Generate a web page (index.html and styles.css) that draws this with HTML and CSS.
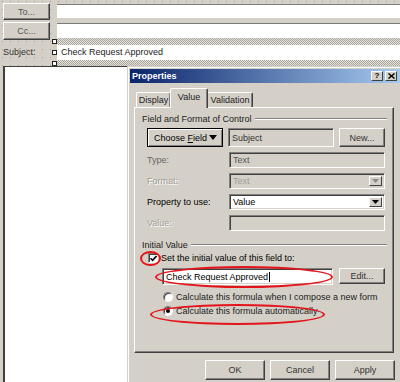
FILE: index.html
```html
<!DOCTYPE html>
<html lang="en">
<head>
  <meta charset="UTF-8">
  <meta name="viewport" content="width=device-width, initial-scale=1.0">
  <title>Properties</title>
  <link rel="stylesheet" href="styles.css">
</head>
<body>
  <div class="screen">
    <div class="form-head">
      <button class="btn addr-btn to-btn">To...</button>
      <div class="field to-field"></div>
      <button class="btn addr-btn cc-btn">Cc...</button>
      <div class="field cc-field"></div>
      <span class="handle handle-1"></span>
      <div class="hatch hatch-1"></div>
      <span class="subject-label">Subject:</span>
      <span class="handle handle-2"></span>
      <div class="field subject-field">Check Request Approved</div>
      <span class="handle handle-3"></span>
      <div class="hatch hatch-2"></div>
    </div>
    <div class="message"></div>

    <div class="dialog">
      <div class="titlebar">
        <span class="title">Properties</span>
        <span class="cap-btns">
          <span class="cap-btn">?</span>
          <span class="cap-btn">
            <svg width="7" height="6" viewBox="0 0 7 6"><path d="M0.5 0.5 L6.5 5.5 M6.5 0.5 L0.5 5.5" stroke="#000" stroke-width="1.4"/></svg>
          </span>
        </span>
      </div>

      <div class="dialog-body">
        <div class="tabs">
          <span class="tab tab-display">Display</span>
          <span class="tab tab-active">Value</span>
          <span class="tab tab-validation">Validation</span>
        </div>

        <div class="panel">
          <div class="group-head"><span>Field and Format of Control</span><span class="rule"></span></div>

          <div class="choose-row">
            <button class="btn choose-btn">
              <span>Choose <u>F</u>ield</span>
              <svg width="8" height="5" viewBox="0 0 8 5"><path d="M0 0 H8 L4 5 Z" fill="#000"/></svg>
            </button>
            <div class="box box-disabled subject-box">Subject</div>
            <button class="btn new-btn">New...</button>
          </div>

          <div class="prop-row">
            <span class="label label-dim">Type:</span>
            <div class="box box-disabled value-dim">Text</div>
          </div>
          <div class="prop-row">
            <span class="label label-off">Format:</span>
            <div class="box box-disabled select value-off">
              <span>Text</span>
              <span class="drop-btn">
                <svg width="7" height="4" viewBox="0 0 7 4"><path d="M0 0 H7 L3.5 4 Z" fill="#8a8a8a"/></svg>
              </span>
            </div>
          </div>
          <div class="prop-row">
            <span class="label">Property to use:</span>
            <div class="box select">
              <span>Value</span>
              <span class="drop-btn">
                <svg width="7" height="4" viewBox="0 0 7 4"><path d="M0 0 H7 L3.5 4 Z" fill="#000"/></svg>
              </span>
            </div>
          </div>
          <div class="prop-row">
            <span class="label label-off">Value:</span>
            <div class="box box-disabled"></div>
          </div>

          <div class="group-head initial-head"><span>Initial Value</span><span class="rule"></span></div>

          <div class="check-row">
            <span class="checkbox">
              <svg width="7" height="7" viewBox="0 0 7 7"><path d="M0.5 3.2 L2.6 5.4 L6.5 1" fill="none" stroke="#000" stroke-width="1.6"/></svg>
            </span>
            <span>Set the initial value of this field to:</span>
          </div>

          <div class="text-row">
            <div class="box text-box">Check Request Approved<span class="caret"></span></div>
            <button class="btn edit-btn">Edit...</button>
          </div>

          <div class="radio-row">
            <span class="radio"></span>
            <span>Calculate this formula when I compose a new form</span>
          </div>
          <div class="radio-row radio-row-2">
            <span class="radio radio-on"></span>
            <span>Calculate this formula automatically</span>
          </div>

          <span class="mark mark-check"></span>
          <span class="mark mark-text"></span>
          <span class="mark mark-auto"></span>
        </div>

        <div class="dialog-buttons">
          <button class="btn footer-btn">OK</button>
          <button class="btn footer-btn">Cancel</button>
          <button class="btn footer-btn">Apply</button>
        </div>
      </div>
    </div>
  </div>
</body>
</html>
```

FILE: styles.css
```css
* {
  box-sizing: border-box;
}

body {
  margin: 0;
  font-family: "Liberation Sans", Arial, sans-serif;
  font-size: 9px;
  color: #000;
  background-color: #d4d0c8;
}

.screen {
  position: relative;
  width: 400px;
  height: 382px;
  overflow: hidden;
  background-color: #d4d0c8;
}

/* classic 3d button */
.btn {
  font: inherit;
  color: #000;
  background-color: #d4d0c8;
  border: 1px solid;
  border-color: #fff #404040 #404040 #fff;
  box-shadow: inset -1px -1px #808080;
  padding: 0;
  margin: 0;
  display: flex;
  align-items: center;
  justify-content: center;
}

/* ---------- form being designed ---------- */

.form-head {
  display: grid;
  grid-template-columns: 57px 1fr;
  grid-template-rows: 22px 16px 7px 15px 6px;
  height: 66px;
  background-image: conic-gradient(at 1px 1px, transparent 270deg, #a3a097 0);
  background-size: 8px 8px;
  background-position: 2px 1px;
}

.addr-btn {
  width: 47px;
  margin-left: 3px;
  color: #555;
}

.to-btn {
  grid-row: 1;
  grid-column: 1;
  height: 17px;
  margin-top: 3px;
}

.cc-btn {
  grid-row: 2 / 4;
  grid-column: 1;
  height: 18px;
  align-self: start;
}

.field {
  background-color: #fff;
  border-top: 1px solid #7a7a7a;
}

.to-field {
  grid-row: 1;
  grid-column: 2;
  margin-top: 4px;
  height: 14px;
}

.cc-field {
  grid-row: 2;
  grid-column: 2;
  margin-top: 1px;
  height: 15px;
}

.subject-field {
  grid-row: 4;
  grid-column: 2;
  height: 15px;
  border-top: none;
  padding-left: 4px;
  line-height: 15px;
  color: #222;
}

.hatch {
  grid-column: 2;
  background: repeating-conic-gradient(#a8a59e 0 25%, #e6e3dd 0 50%) 0 0 / 2px 2px;
}

.hatch-1 {
  grid-row: 3;
}

.hatch-2 {
  grid-row: 5;
}

.subject-label {
  grid-row: 4;
  grid-column: 1;
  padding-left: 3px;
  line-height: 15px;
  color: #333;
}

.handle {
  grid-column: 1;
  justify-self: end;
  align-self: center;
  width: 5px;
  height: 5px;
  background-color: #fff;
  border: 1px solid #222;
}

.handle-1 {
  grid-row: 3;
}

.handle-2 {
  grid-row: 4;
}

.handle-3 {
  grid-row: 5;
}

.message {
  margin-left: 3px;
  height: 316px;
  background-color: #fff;
  border-left: 2px solid #404040;
  border-top: 1px solid #404040;
}

/* ---------- properties dialog ---------- */

.dialog {
  position: absolute;
  left: 127px;
  top: 66px;
  width: 276px;
  height: 330px;
  background-color: #d4d0c8;
  border: 1px solid;
  border-color: #d4d0c8 #404040 #404040 #d4d0c8;
  box-shadow: inset 1px 1px #fff, inset -1px -1px #808080;
  padding: 2px;
}

.titlebar {
  height: 14px;
  display: flex;
  align-items: center;
  justify-content: space-between;
  padding: 0 3px 0 2px;
  background: linear-gradient(90deg, #0a246a, #a6caf0);
  color: #fff;
  font-weight: bold;
}

.cap-btns {
  display: flex;
  gap: 2px;
}

.cap-btn {
  width: 12px;
  height: 10px;
  display: flex;
  align-items: center;
  justify-content: center;
  background-color: #d4d0c8;
  border: 1px solid;
  border-color: #fff #404040 #404040 #fff;
  color: #000;
  font-size: 8px;
  line-height: 8px;
}

.dialog-body {
  padding: 5px 0 0 4px;
}

.tabs {
  display: flex;
  align-items: flex-end;
  height: 19px;
  padding-left: 2px;
}

.tab {
  height: 15px;
  line-height: 15px;
  text-align: center;
  border: 1px solid;
  border-bottom: none;
  border-color: #fff #404040 #404040 #fff;
  border-radius: 2px 2px 0 0;
  box-shadow: inset -1px 0 #808080;
  color: #222;
}

.tab-display {
  width: 35px;
}

.tab-active {
  position: relative;
  z-index: 1;
  width: 38px;
  height: 20px;
  line-height: 14px;
  margin: 0 0 -1px -1px;
  padding-top: 1px;
  background-color: #d4d0c8;
}

.tab-validation {
  width: 46px;
  margin-left: -1px;
}

.panel {
  position: relative;
  width: 260px;
  height: 246px;
  border: 1px solid;
  border-color: #fff #404040 #404040 #fff;
  box-shadow: inset -1px -1px #808080;
  padding: 5px 8px 0 7px;
}

.group-head {
  display: flex;
  align-items: center;
  gap: 3px;
  height: 12px;
  color: #222;
}

.group-head .rule {
  flex: 1;
  height: 2px;
  margin-right: -2px;
  border-top: 1px solid #808080;
  border-bottom: 1px solid #fff;
}

.choose-row {
  display: flex;
  gap: 5px;
  height: 19px;
  margin: 3px 0 0 5px;
}

.choose-btn {
  width: 76px;
  border-color: #000;
  box-shadow: inset 1px 1px #fff, inset -1px -1px #808080;
  justify-content: space-between;
  padding: 0 5px 0 6px;
}

.new-btn {
  width: 46px;
  color: #333;
}

.box {
  display: flex;
  align-items: center;
  background-color: #fff;
  border: 1px solid;
  border-color: #808080 #fff #fff #808080;
  box-shadow: inset 1px 1px #404040, inset -1px -1px #d4d0c8;
  padding: 0 3px;
}

.box-disabled {
  background-color: #d4d0c8;
}

.subject-box {
  flex: 1;
  color: #333;
}

.prop-row {
  display: flex;
  height: 16px;
  margin: 5px 0 0 5px;
}

.prop-row .label {
  width: 82px;
  line-height: 16px;
}

.prop-row .box {
  flex: 1;
}

.label-dim {
  color: #666;
}

.label-off {
  color: #a09d96;
  text-shadow: 1px 1px #fff;
}

.value-dim {
  color: #555;
}

.value-off {
  color: #a09d96;
}

.select {
  justify-content: space-between;
  padding: 2px 2px 2px 3px;
}

.drop-btn {
  width: 13px;
  height: 100%;
  display: flex;
  align-items: center;
  justify-content: center;
  background-color: #d4d0c8;
  border: 1px solid;
  border-color: #fff #404040 #404040 #fff;
}

.initial-head {
  margin-top: 8px;
}

.check-row {
  display: flex;
  align-items: center;
  gap: 3px;
  height: 12px;
  margin: 1px 0 0 6px;
}

.checkbox {
  width: 10px;
  height: 10px;
  display: flex;
  align-items: center;
  justify-content: center;
  background-color: #fff;
  border: 1px solid;
  border-color: #808080 #fff #fff #808080;
  box-shadow: inset 1px 1px #404040;
}

.text-row {
  display: flex;
  gap: 6px;
  height: 17px;
  margin: 4px 0 0 20px;
}

.text-box {
  width: 171px;
  padding-left: 3px;
}

.caret {
  width: 1px;
  height: 10px;
  margin-left: 1px;
  background-color: #000;
}

.edit-btn {
  width: 46px;
  height: 16px;
  color: #333;
}

.radio-row {
  display: flex;
  align-items: center;
  gap: 3px;
  height: 12px;
  margin: 6px 0 0 21px;
  color: #222;
}

.radio-row-2 {
  margin-top: 2px;
}

.radio {
  width: 10px;
  height: 10px;
  border-radius: 50%;
  background-color: #fff;
  border: 1px solid;
  border-color: #808080 #fff #fff #808080;
  box-shadow: inset 1px 1px #404040;
  display: flex;
  align-items: center;
  justify-content: center;
}

.radio-on::after {
  content: "";
  width: 4px;
  height: 4px;
  border-radius: 50%;
  background-color: #000;
}

/* red annotation rings drawn over the dialog */
.mark {
  position: absolute;
  border: 2px solid #e3141b;
  border-radius: 50%;
}

.mark-check {
  left: 5px;
  top: 143px;
  width: 21px;
  height: 15px;
}

.mark-text {
  left: 20px;
  top: 158px;
  width: 178px;
  height: 22px;
}

.mark-auto {
  left: 15px;
  top: 196px;
  width: 175px;
  height: 21px;
}

.dialog-buttons {
  display: flex;
  justify-content: flex-end;
  gap: 5px;
  width: 261px;
  margin-top: 7px;
}

.footer-btn {
  width: 60px;
  height: 20px;
  color: #333;
}
```
